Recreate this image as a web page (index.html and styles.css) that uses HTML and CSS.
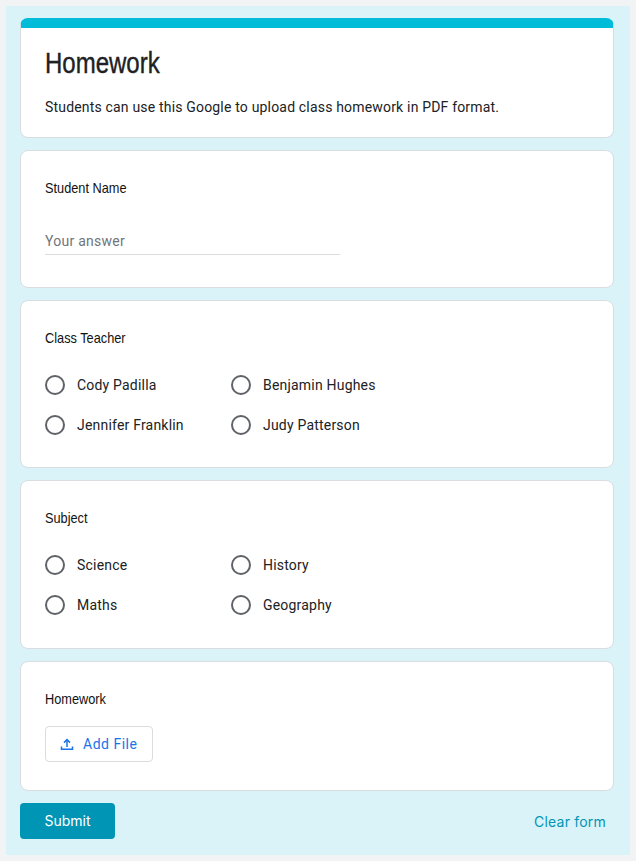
FILE: index.html
```html
<!DOCTYPE html>
<html lang="en">

<head>
    <meta charset="UTF-8">
    <meta name="viewport" content="width=device-width, initial-scale=1.0">
    <title>Homework</title>
    <link rel="stylesheet" href="styles.css">
</head>

<body>
    <form class="form-panel">
        <div class="card title-card">
            <h1 class="form-title">Homework</h1>
            <p class="form-desc">Students can use this Google to upload class homework in PDF format.</p>
        </div>

        <div class="card name-card">
            <div class="question">Student Name</div>
            <div class="answer">Your answer</div>
        </div>

        <div class="card teacher-card">
            <div class="question">Class Teacher</div>
            <div class="options">
                <div class="option"><span class="radio"></span>Cody Padilla</div>
                <div class="option"><span class="radio"></span>Benjamin Hughes</div>
                <div class="option"><span class="radio"></span>Jennifer Franklin</div>
                <div class="option"><span class="radio"></span>Judy Patterson</div>
            </div>
        </div>

        <div class="card subject-card">
            <div class="question">Subject</div>
            <div class="options">
                <div class="option"><span class="radio"></span>Science</div>
                <div class="option"><span class="radio"></span>History</div>
                <div class="option"><span class="radio"></span>Maths</div>
                <div class="option"><span class="radio"></span>Geography</div>
            </div>
        </div>

        <div class="card file-card">
            <div class="question">Homework</div>
            <div class="add-file">
                <svg class="upload-icon" viewBox="0 0 14 14" width="14" height="14" fill="none" stroke="#1a73e8" stroke-width="1.5">
                    <path d="M7 10V3" />
                    <path d="M4 5.6L7 2.6L10 5.6" />
                    <path d="M1.5 9.5V12.2H12.5V9.5" />
                </svg>
                Add File
            </div>
        </div>

        <div class="actions">
            <div class="submit">Submit</div>
            <div class="clear">Clear form</div>
        </div>
    </form>
</body>

</html>
```

FILE: styles.css
```css
html, body {
    margin: 0;
    padding: 0;
    height: 100%;
    background-color: #f1f3f4;
    font-family: Roboto, Arial, sans-serif;
    color: #202124;
}

.form-panel {
    box-sizing: border-box;
    width: 624px;
    height: 849px;
    margin: 6px;
    padding: 12px 16px 0 14px;
    background-color: #d9f3f9;
    display: flex;
    flex-direction: column;
    gap: 12px;
}

.card {
    box-sizing: border-box;
    background: #fff;
    border: 1px solid #dadce0;
    border-radius: 8px;
    padding: 0 24px;
}

.title-card {
    height: 120px;
    border-top: 10px solid #00bcd9;
}

.name-card {
    height: 138px;
}

.teacher-card {
    height: 168px;
}

.subject-card {
    height: 169px;
}

.file-card {
    height: 130px;
}

/* headings are a narrow hand lettered face in the original, squeeze the sans */
.form-title {
    margin: 0;
    padding-top: 17px;
    font-family: "Liberation Sans", sans-serif;
    font-size: 30px;
    line-height: 36px;
    font-weight: 400;
    transform: scaleX(0.8);
    transform-origin: left;
    -webkit-text-stroke: 0.4px #202124;
}

.form-desc {
    margin: 16px 0 0;
    font-size: 14px;
    line-height: 20px;
    letter-spacing: 0.18px;
}

.question {
    padding-top: 28px;
    font-family: "Liberation Sans", sans-serif;
    font-size: 15px;
    line-height: 18px;
    color: #111;
    transform: scaleX(0.85);
    transform-origin: left;
}

.answer {
    box-sizing: border-box;
    width: 295px;
    height: 24px;
    margin-top: 34px;
    border-bottom: 1px solid #dadce0;
    font-size: 14px;
    line-height: 20px;
    letter-spacing: 0.25px;
    color: #70757a;
}

.options {
    display: grid;
    grid-template-columns: 186px 186px;
    grid-auto-rows: 40px;
    margin-top: 18px;
}

.option {
    display: flex;
    align-items: center;
    font-size: 14px;
    letter-spacing: 0.2px;
}

.radio {
    box-sizing: border-box;
    width: 20px;
    height: 20px;
    margin-right: 12px;
    border: 2px solid #5f6368;
    border-radius: 50%;
}

.add-file {
    box-sizing: border-box;
    display: flex;
    align-items: center;
    width: 108px;
    height: 36px;
    margin-top: 18px;
    padding-left: 14px;
    border: 1px solid #dadce0;
    border-radius: 4px;
    font-size: 14px;
    letter-spacing: 0.5px;
    color: #1a73e8;
}

.upload-icon {
    margin-right: 9px;
}

.actions {
    display: flex;
    justify-content: space-between;
    align-items: center;
    height: 36px;
}

.submit {
    width: 95px;
    height: 36px;
    line-height: 36px;
    text-align: center;
    background: #0095b5;
    border-radius: 4px;
    font-family: Inter, sans-serif;
    font-size: 14px;
    color: #fff;
}

.clear {
    padding-right: 8px;
    font-family: Inter, sans-serif;
    font-size: 14px;
    letter-spacing: 0.2px;
    color: #0095b5;
}
```
